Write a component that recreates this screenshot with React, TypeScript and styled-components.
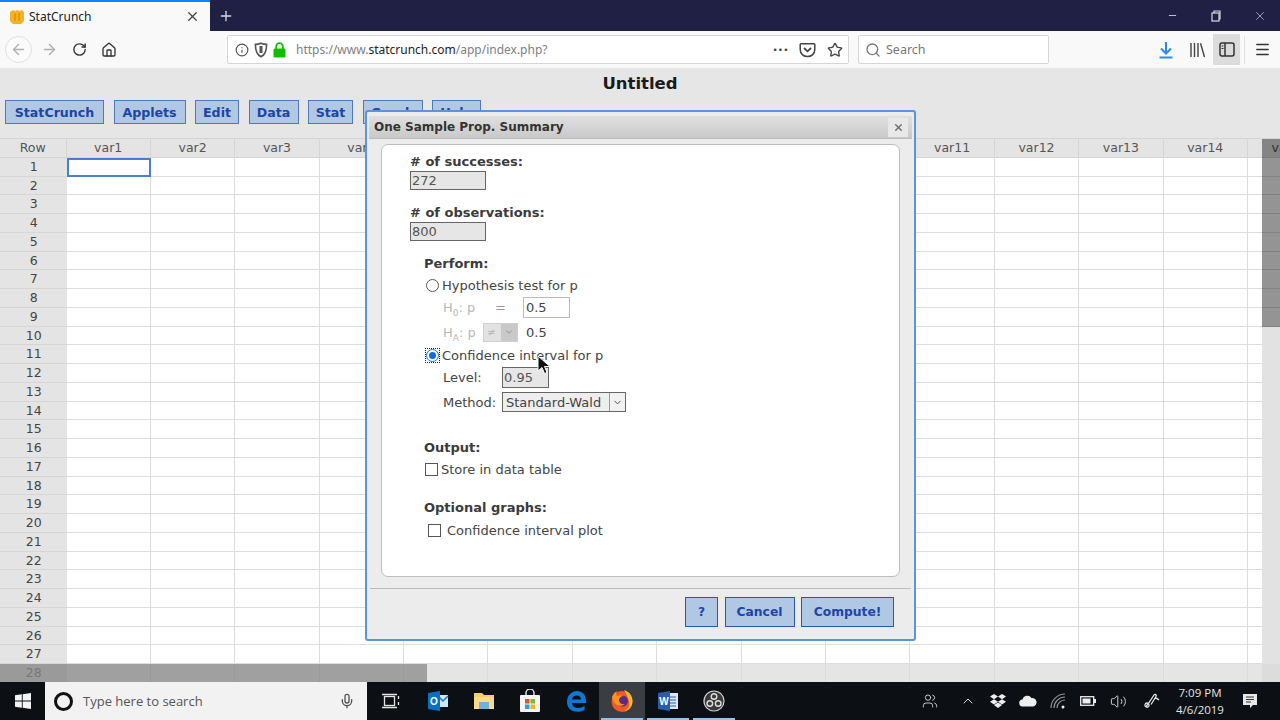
import React from "react";
import styled, { createGlobalStyle } from "styled-components";
import { ArrowLeft, ArrowRight, RotateCw, Home, Info, Star, Search, Menu, X, Plus, Minus, Mic, ChevronDown, ChevronUp, Users, Volume2 } from "lucide-react";

const Global = createGlobalStyle`
  html, body { margin: 0; padding: 0; width: 1280px; height: 720px; overflow: hidden; background: #e6e6e6; }
  * { box-sizing: border-box; }
  #root { width: 1280px; height: 720px; font-family: "DejaVu Sans", Verdana, sans-serif; }
`;
const Screen = styled.div`display: flex; flex-direction: column; width: 1280px; height: 720px; overflow: hidden;`;

/* Browser tab strip */
const TabStrip = styled.div`display: flex; align-items: stretch; height: 31px; background: #1f2044; flex: none;`;
const Tab = styled.div`
  width: 210px; background: #f9f9fa; border-top: 2px solid #0a84ff; display: flex; align-items: center;
  padding: 0 10px 0 9px; gap: 4px; font: 12px "Noto Sans", sans-serif; color: #222;
`;
const TabTitle = styled.span`flex: 1;`;
const NewTab = styled.div`width: 32px; display: flex; align-items: center; justify-content: center; color: #d8d8e2;`;
const WindowControls = styled.div`margin-left: auto; margin-right: -2px; display: flex; align-items: center; color: #cfd0dc;`;
const WinBtn = styled.div`width: 44px; display: flex; align-items: center; justify-content: center;`;

/* Browser navigation toolbar */
const NavBar = styled.div`display: flex; align-items: center; height: 37px; background: #f9f9fa; padding-left: 5px; flex: none;`;
const BackCircle = styled.div`
  width: 27px; height: 27px; border-radius: 50%; border: 1px solid #e0e0e0; background: #fbfbfb; color: #b0b0b0;
  display: flex; align-items: center; justify-content: center; margin-right: 2px;
`;
const NavIcon = styled.div<{ $w?: number; $c?: string; $bg?: string }>`
  width: ${p => p.$w ?? 30}px; height: 31px; display: flex; align-items: center; justify-content: center;
  color: ${p => p.$c ?? "#333"}; background: ${p => p.$bg ?? "transparent"}; flex: none;
`;
const UrlBox = styled.div`
  width: 622px; height: 29px; margin-left: 103px; background: #fff; border: 1px solid #d6d6d6; border-radius: 2px;
  display: flex; align-items: center; padding-left: 4px; flex: none;
`;
const UrlIcon = styled.div`width: 19px; display: flex; justify-content: center; color: #555; flex: none;`;
const UrlText = styled.div`font: 12px "Noto Sans", sans-serif; color: #808080; margin-left: 7px; flex: 1; white-space: nowrap;`;
const Domain = styled.span`color: #222;`;
const UrlAction = styled.div`width: 27px; display: flex; justify-content: center; color: #444; flex: none; font-size: 9px;`;
const SearchBox = styled.div`
  width: 191px; height: 29px; margin-left: 9px; background: #fff; border: 1px solid #d6d6d6; border-radius: 2px;
  display: flex; align-items: center; gap: 5px; padding-left: 6px; color: #777; font: 12.5px "Noto Sans", sans-serif; flex: none;
`;
const NavRight = styled.div`margin-left: 102px; display: flex; align-items: center;`;
const NavDivider = styled.div`width: 1px; height: 28px; background: #e2e2e2; margin: 0 5px 0 4px;`;

/* StatCrunch page */
const Page = styled.div`position: relative; flex: 1; background: #e6e6e6; overflow: hidden;`;
const PageTitle = styled.h1`margin: 0; height: 32px; padding-top: 6px; text-align: center; font-size: 16.5px; line-height: 20px; color: #1a1a1a; font-weight: bold;`;
const MenuBar = styled.div`display: flex; gap: 9.5px; padding-left: 5px; height: 38px;`;
const MenuBtn = styled.div<{ $w: number }>`
  width: ${p => p.$w}px; height: 24px; background: #b0c8e4; border: 1px solid #4f78bd; color: #1c45a8;
  font-size: 12.6px; font-weight: bold; line-height: 23px; white-space: nowrap; text-align: center;
`;

const Sheet = styled.div`position: relative; height: 544px; overflow: hidden; border-top: 1px solid #d4d4d4;`;
const SheetGrid = styled.div`display: grid; grid-template-columns: 66.5px repeat(15, 84.4px); grid-auto-rows: 18.75px; width: 1340px;`;
const HeadCell = styled.div`
  background: #e4e4e4; border-right: 1px solid #d6d6d6; border-bottom: 1px solid #d6d6d6;
  text-align: center; font-size: 12.5px; line-height: 18px; color: #555; white-space: nowrap; overflow: hidden;
`;
const RowCell = styled(HeadCell)`border-right: none; padding-left: 1px; color: #444;`;
const Cell = styled.div<{ $active?: boolean }>`
  background: #fff; border-right: 1px solid #ddd; border-bottom: 1px solid #ddd;
  ${p => p.$active ? "outline: 2px solid #4a7fd0; outline-offset: -2px;" : ""}
`;
const VThumb = styled.div`position: absolute; right: 0; top: 0; width: 18px; height: 188px; background: rgba(0,0,0,.42);`;
const VTrack = styled.div`position: absolute; right: 0; top: 188px; bottom: 0; width: 18px; background: #e2e2e2;`;
const HTrack = styled.div`position: absolute; left: 0; right: 0; bottom: 0; height: 18px; background: rgba(218,218,218,.7);`;
const HThumb = styled.div`position: absolute; left: 0; bottom: 0; width: 427px; height: 18px; background: rgba(0,0,0,.3);`;

/* Dialog */
const Dialog = styled.div`
  position: absolute; left: 365px; top: 42px; width: 551px; height: 531px; background: #ececec;
  border: 2px solid #5b93e0; border-radius: 3px; padding: 4px 2px 0; display: flex; flex-direction: column;
`;
const DialogTitle = styled.div`
  height: 23px; background: linear-gradient(#e0e0e0, #c9c9c9); border-bottom: 1px solid #bbb; flex: none;
  display: flex; align-items: center; justify-content: space-between; padding: 0 4px 0 5px;
  font-size: 12px; font-weight: bold; color: #333;
`;
const CloseBox = styled.div`width: 20px; height: 19px; background: #e8e8e8; display: flex; align-items: center; justify-content: center; color: #777;`;
const Panel = styled.div`
  margin: 5px 12px 0; height: 433px; flex: none; background: #fff; border: 1px solid #bdbdbd; border-radius: 7px;
  padding: 7px 0 0 28px; color: #444; font-size: 13px;
`;
const Label = styled.div<{ $top?: number; $indent?: number }>`
  font-weight: bold; height: 18px; padding-top: 1px; line-height: 18px; font-size: 13px; color: #3b3b3b;
  margin-top: ${p => p.$top ?? 0}px; margin-left: ${p => p.$indent ?? 0}px;
`;
const ValueInput = styled.div`
  margin-top: 1px; width: 76px; height: 19px; background: #e6e6e6; border: 1px solid #666; padding-left: 1px;
  font-size: 13px; line-height: 18px; color: #555;
`;
const Row = styled.div<{ $top?: number; $h?: number; $left: number; $muted?: boolean }>`
  display: flex; align-items: center; height: ${p => p.$h ?? 20}px; margin-top: ${p => p.$top ?? 0}px;
  margin-left: ${p => p.$left}px; color: ${p => p.$muted ? "#b8b8b8" : "#444"}; white-space: nowrap;
`;
const Radio = styled.span<{ $on?: boolean }>`
  width: 13px; height: 13px; border-radius: 50%; border: 1px solid #555; background: #fff; margin-right: 3px; position: relative; flex: none;
  ${p => p.$on ? `border-color: #1f73d8;
    &::before { content: ""; position: absolute; inset: -2px; border: 1px dotted #223; }
    &::after { content: ""; position: absolute; inset: 2px; border-radius: 50%; background: #0a6ee0; }` : ""}
`;
const Check = styled.span<{ $gap: number }>`width: 13px; height: 13px; border: 1px solid #555; background: #fff; margin-right: ${p => p.$gap}px; flex: none;`;
const HypName = styled.span<{ $w: number }>`width: ${p => p.$w}px; flex: none;`;
const Sub = styled.sub`font-size: 9px; line-height: 0;`;
const Small = styled.span`color: #444;`;
const Equals = styled.span`color: #999;`;
const PlainInput = styled.div`
  width: 47px; height: 21px; margin-left: 17px; border: 1px solid #bbb; padding-left: 2px; line-height: 19px; color: #444; background: #fff;
`;
const DisabledSelect = styled.div`
  width: 35px; height: 19px; margin: 0 8px 0 3px; display: flex; background: #e2e2e2; border: 1px solid #cfcfcf;
  font-size: 10px; color: #b5b5b5; align-items: center;
`;
const DisabledArrow = styled.div`margin-left: auto; width: 16px; height: 100%; background: #c9c9c9; color: #888; display: flex; align-items: center; justify-content: center;`;
const FieldName = styled.span`width: 59px; flex: none;`;
const LevelBox = styled.div`width: 47px; height: 21px; background: #e6e6e6; border: 1px solid #666; padding-left: 1px; line-height: 19px; color: #555;`;
const SelectBox = styled.div`
  width: 124px; height: 20px; background: #eee; border: 1px solid #666; display: flex; align-items: center; padding-left: 3px; color: #444;
`;
const SelectArrow = styled.div`margin-left: auto; width: 16px; height: 100%; border-left: 1px solid #999; background: #f2f2f2; display: flex; align-items: center; justify-content: center;`;
const Separator = styled.div`height: 1px; background: #bdbdbd; margin: 11px 1px 0; flex: none;`;
const Footer = styled.div`display: flex; justify-content: flex-end; gap: 6.5px; margin-top: 8px; padding-right: 18px;`;
const FootBtn = styled.div<{ $w: number }>`
  width: ${p => p.$w}px; height: 30px; background: #b0c8e4; border: 1px solid #2a55a8; color: #1c45a8; font-size: 12.3px; font-weight: bold;
  text-align: center; line-height: 29px;
`;
const Cursor = styled.svg`position: absolute; left: 537px; top: 287px;`;

/* Taskbar */
const Taskbar = styled.div`height: 38px; flex: none; background: #0c1015; display: flex; align-items: stretch; color: #e8e8e8;`;
const StartBtn = styled.div`width: 45px; display: flex; align-items: center; justify-content: center;`;
const SearchBar = styled.div`
  width: 322px; background: #f2f2f2; display: flex; align-items: center; padding: 0 12px 0 9px; gap: 10px; color: #555;
  font: 13px "Open Sans", "Noto Sans", sans-serif;
`;
const Cortana = styled.span`width: 19px; height: 19px; border-radius: 50%; border: 3px solid #111; flex: none;`;
const SearchText = styled.span`flex: 1;`;
const AppSlot = styled.div<{ $active?: boolean; $open?: boolean; $w?: number }>`
  position: relative; width: ${p => p.$w ?? 46}px; display: flex; align-items: center; justify-content: center;
  background: ${p => p.$active ? "#3a3d42" : "transparent"};
  ${p => p.$open ? `&::after { content: ""; position: absolute; left: 2px; right: 2px; bottom: 0; height: 2px; background: #8fc4ea; }` : ""}
`;
const Tray = styled.div`margin-left: auto; display: flex; align-items: center; padding-right: 5px;`;
const TraySlot = styled.div<{ $w?: number; $mr?: number }>`
  width: ${p => p.$w ?? 30}px; margin-right: ${p => p.$mr ?? 0}px; display: flex; align-items: center; justify-content: center; color: #ddd;
`;
const Clock = styled.div`width: 50px; text-align: center; white-space: nowrap; font: 11.5px/17px "Open Sans", "Noto Sans", sans-serif; color: #e4e4e4;`;

const Favicon = () => (
  <svg width="16" height="16" viewBox="0 0 16 16"><path d="M1 3l3-2 2 1 2-1 2 1 3-1 2 2v9l-3 3H4l-3-3z" fill="#f4b320" /><path d="M5 4h2v8H5zM9 4h2v8H9z" fill="#e39a12" /></svg>
);
const ShieldIcon = () => (
  <svg width="14" height="16" viewBox="0 0 14 16" fill="none" stroke="#555" strokeWidth="1.6"><path d="M7 1.2c2 1 3.8 1.2 5.6 1.2 0 6-1 10-5.6 12.4C2.4 12.4 1.4 8.4 1.4 2.4 3.2 2.4 5 2.2 7 1.2z" /><path d="M7 4v7" strokeWidth="3" /></svg>
);
const GreenLock = () => (
  <svg width="13" height="16" viewBox="0 0 13 16"><path d="M3.200 7V4.500a3.300 3.300 0 016.600 0V7" fill="none" stroke="#12bc00" strokeWidth="1.800" /><rect x=".5" y="6.500" width="12" height="9" rx="1.200" fill="#12bc00" /></svg>
);
const Pocket = () => (
  <svg width="17" height="16" viewBox="0 0 17 16" fill="none" stroke="#444" strokeWidth="1.5"><path d="M2 1.8h13c.5 0 .8.3.8.8v5c0 4-3.2 7-7.3 7S1.200 11.600 1.200 7.600v-5c0-.5.3-.8.8-.8z" /><path d="M5 6l3.500 3.300L12 6" strokeWidth="1.800" /></svg>
);
const DownloadIcon = () => (
  <svg width="16" height="18" viewBox="0 0 16 18" fill="none" stroke="#2a8ae6" strokeWidth="2"><path d="M8 1v11M3 7.500L8 12.500 13 7.500" /><path d="M1.500 16.500h13" /></svg>
);
const Library = () => (
  <svg width="17" height="16" viewBox="0 0 17 16" fill="none" stroke="#444" strokeWidth="1.400"><path d="M2 1v14M5.500 1v14M9 1v14M11.500 1.200l4 13.800" /></svg>
);
const SidebarIcon = () => (
  <svg width="16" height="15" viewBox="0 0 16 15" fill="none" stroke="#333" strokeWidth="1.500"><rect x="1" y="1" width="14" height="13" rx="2" /><path d="M6 1v13" /><path d="M2.500 4h2M2.500 6.500h2" strokeWidth="1" /></svg>
);
const Restore = () => (
  <svg width="10" height="12" viewBox="0 0 10 12" fill="none" stroke="#dcdce6" strokeWidth="1.200"><rect x="1" y="3" width="7" height="8" /><path d="M3 3V1h6v8H8" /></svg>
);
const Windows = () => (
  <svg width="16" height="16" viewBox="0 0 16 16" fill="#f4f4f4"><path d="M0 2.300l6.800-1v6.300H0zM7.700 1.200L16 0v7.600H7.700zM0 8.400h6.800v6.300L0 13.700zM7.700 8.400H16V16l-8.300-1.200z" /></svg>
);
const TaskView = () => (
  <svg width="18" height="16" viewBox="0 0 18 16" fill="none" stroke="#e4e4e4" strokeWidth="1.300"><rect x="2.500" y="3.500" width="10" height="9" /><path d="M0 1.500h15M0 14.500h15M16.500 3v3M16.500 9v3" /></svg>
);
const Outlook = () => (
  <svg width="22" height="22" viewBox="0 0 22 22"><rect x="11" y="5" width="10" height="12" fill="#cfe6f8" /><path d="M11 6l5 5 5-5" fill="none" stroke="#1a78c8" strokeWidth="1.500" /><path d="M1 3l12-2v20L1 19z" fill="#0a70c4" /><text x="7" y="15" textAnchor="middle" fontSize="10" fontWeight="bold" fill="#fff" fontFamily="Liberation Sans">O</text></svg>
);
const Folder = () => (
  <svg width="22" height="20" viewBox="0 0 22 20"><path d="M1 2h8l2 2h10v14H1z" fill="#f2cf6e" /><path d="M1 6h20v12H1z" fill="#f8dc8c" /><rect x="6" y="11" width="10" height="7" fill="#6db4d8" /></svg>
);
const Store = () => (
  <svg width="22" height="24" viewBox="0 0 22 24"><path d="M7 7V4a4 4 0 018 0v3" fill="none" stroke="#ddd" strokeWidth="1.500" /><rect x="1" y="6" width="20" height="17" rx="1" fill="#f5f5f5" /><rect x="6" y="10" width="4.500" height="4.500" fill="#e2502e" /><rect x="11.500" y="10" width="4.500" height="4.500" fill="#7db92b" /><rect x="6" y="15.500" width="4.500" height="4.500" fill="#2b9fe0" /><rect x="11.500" y="15.500" width="4.500" height="4.500" fill="#f0b51e" /></svg>
);
const Edge = () => (
  <svg width="22" height="22" viewBox="0 0 22 22" fill="none"><path d="M2 12C2 5 7 1 12 1c5 0 9 3.500 9 10v2H7c.3 3.500 3 5 6 5 2.500 0 4.600-.7 6.500-2v4c-2 1.200-4.500 1.800-7 1.800C6.500 21.800 2 18 2 12zm5-2.500h9c0-2.500-1.800-4-4.300-4-2.500 0-4.200 1.500-4.700 4z" fill="#0f78d4" fillRule="evenodd" /></svg>
);
const Firefox = () => (
  <svg width="24" height="24" viewBox="0 0 24 24"><circle cx="12" cy="12.500" r="10.500" fill="#f0572a" /><circle cx="12.500" cy="12" r="5.500" fill="#5b2c86" /><path d="M14 1c5 1.500 9 6 8.500 12-.5 5-4 9-9 9.500 5-2 6.500-6 5.500-10C18 8 16 4 14 1z" fill="#fbb92e" /><path d="M2 8c1-3 3-5 5-6-1 2-1 4 0 5 2-1 5-1 7 0-3 0-5 2-5 4 0 3 3 5 6 4-3 3-9 2-11-2-1-2-2-3-2-5z" fill="#f89322" /></svg>
);
const Word = () => (
  <svg width="22" height="22" viewBox="0 0 22 22"><rect x="10" y="3" width="11" height="16" fill="#dbe7f5" /><path d="M12 7h7M12 10h7M12 13h7M12 16h7" stroke="#2b5fa8" strokeWidth="1" /><path d="M1 3l12-2v20L1 19z" fill="#2a5cab" /><text x="7" y="15" textAnchor="middle" fontSize="10" fontWeight="bold" fill="#fff" fontFamily="Liberation Sans">W</text></svg>
);
const Obs = () => (
  <svg width="22" height="22" viewBox="0 0 22 22"><circle cx="11" cy="11" r="10" fill="#3a3a3a" stroke="#cfcfcf" strokeWidth="1.200" /><circle cx="11" cy="6.500" r="2.800" fill="none" stroke="#ddd" strokeWidth="1.400" /><circle cx="6.800" cy="13.500" r="2.800" fill="none" stroke="#ddd" strokeWidth="1.400" /><circle cx="15.200" cy="13.500" r="2.800" fill="none" stroke="#ddd" strokeWidth="1.400" /></svg>
);
const Dropbox = () => (
  <svg width="16" height="14" viewBox="0 0 16 14" fill="#eee"><path d="M4 0l4 2.600L4 5.200 0 2.600zM12 0l4 2.600-4 2.600-4-2.600zM0 7.800l4-2.600 4 2.600-4 2.600zM12 5.200l4 2.600-4 2.600-4-2.600zM4 11l4-2.500 4 2.500-4 3z" /></svg>
);
const Cloud = () => (
  <svg width="18" height="12" viewBox="0 0 18 12" fill="#eee"><path d="M4 11.500a3.500 3.500 0 01-.5-7A5 5 0 0112.500 3 4 4 0 0114 11.500z" /></svg>
);
const Wifi = () => (
  <svg width="16" height="16" viewBox="0 0 16 16" fill="none" stroke="#bbb" strokeWidth="1.200"><path d="M1 15A14 14 0 0115 1M4 15A11 11 0 0115 4M7 15a8 8 0 018-8" opacity=".75" /><circle cx="13" cy="14" r="1.500" fill="#eee" stroke="none" /></svg>
);
const Battery = () => (
  <svg width="16" height="10" viewBox="0 0 16 10"><rect x=".7" y=".7" width="13" height="8.600" fill="none" stroke="#eee" strokeWidth="1.300" /><rect x="2.500" y="2.500" width="8" height="5" fill="#eee" /><rect x="14" y="3" width="2" height="4" fill="#eee" /></svg>
);
const Pen = () => (
  <svg width="18" height="18" viewBox="0 0 18 18" fill="none" stroke="#e4e4e4" strokeWidth="1.300"><path d="M3 15c-2-1-1-4 1-4s3 3 1 4-2-1 0-3l6-9c1-1.500 3 0 2 1.500l-5 8M12 6c2 0 3 1 4 2" /></svg>
);
const Notify = () => (
  <svg width="16" height="16" viewBox="0 0 16 16"><path d="M1 1h14v11h-4l-3 3v-3H1z" fill="#e8e8e8" /><path d="M4 4h8M4 6.500h8M4 9h5" stroke="#333" strokeWidth="1" /></svg>
);

const menus: [string, number][] = [["StatCrunch", 99], ["Applets", 72], ["Edit", 44], ["Data", 50], ["Stat", 45], ["Graph", 60], ["Help", 49]];
const columns = Array.from({ length: 15 }, (_, i) => `var${i + 1}`);
const rows = Array.from({ length: 28 }, (_, i) => i + 1);

export default function App() {
  return (
    <Screen>
      <Global />
      <TabStrip>
        <Tab><Favicon /><TabTitle>StatCrunch</TabTitle><X size={15} color="#444" /></Tab>
        <NewTab><Plus size={16} /></NewTab>
        <WindowControls>
          <WinBtn><Minus size={11} /></WinBtn>
          <WinBtn><Restore /></WinBtn>
          <WinBtn><X size={14} strokeWidth={1.2} /></WinBtn>
        </WindowControls>
      </TabStrip>
      <NavBar>
        <BackCircle><ArrowLeft size={17} /></BackCircle>
        <NavIcon $c="#b0b0b0"><ArrowRight size={17} /></NavIcon>
        <NavIcon><RotateCw size={15} strokeWidth={2.2} /></NavIcon>
        <NavIcon><Home size={16} strokeWidth={2} /></NavIcon>
        <UrlBox>
          <UrlIcon><Info size={14} /></UrlIcon>
          <UrlIcon><ShieldIcon /></UrlIcon>
          <UrlIcon><GreenLock /></UrlIcon>
          <UrlText>https://www.<Domain>statcrunch.com</Domain>/app/index.php?</UrlText>
          <UrlAction>•••</UrlAction>
          <UrlAction><Pocket /></UrlAction>
          <UrlAction><Star size={16} /></UrlAction>
        </UrlBox>
        <SearchBox><Search size={16} />Search</SearchBox>
        <NavRight>
          <NavIcon $w={30}><DownloadIcon /></NavIcon>
          <NavIcon $w={32}><Library /></NavIcon>
          <NavIcon $w={27} $bg="#dcdcdc"><SidebarIcon /></NavIcon>
          <NavDivider />
          <NavIcon $w={24}><Menu size={17} /></NavIcon>
        </NavRight>
      </NavBar>
      <Page>
        <PageTitle>Untitled</PageTitle>
        <MenuBar>
          {menus.map(([m, w]) => <MenuBtn key={m} $w={w}>{m}</MenuBtn>)}
        </MenuBar>
        <Sheet>
          <SheetGrid>
            <HeadCell>Row</HeadCell>
            {columns.map(c => <HeadCell key={c}>{c}</HeadCell>)}
            {rows.map(r => (
              <React.Fragment key={r}>
                <RowCell>{r}</RowCell>
                {columns.map((c, i) => <Cell key={c} $active={r === 1 && i === 0} />)}
              </React.Fragment>
            ))}
          </SheetGrid>
          <VThumb />
          <VTrack />
          <HTrack />
          <HThumb />
        </Sheet>
        <Dialog>
          <DialogTitle>
            One Sample Prop. Summary
            <CloseBox><X size={11} strokeWidth={3.5} /></CloseBox>
          </DialogTitle>
          <Panel>
            <Label># of successes:</Label>
            <ValueInput>272</ValueInput>
            <Label $top={13}># of observations:</Label>
            <ValueInput>800</ValueInput>
            <Label $top={13} $indent={14}>Perform:</Label>
            <Row $top={3} $left={16}><Radio />Hypothesis test for p</Row>
            <Row $top={2} $h={21} $left={33} $muted>
              <HypName $w={52}>H<Sub>0</Sub>: p</HypName><Equals>=</Equals>
              <PlainInput>0.5</PlainInput>
            </Row>
            <Row $top={4} $left={33} $muted>
              <HypName $w={37}>H<Sub>A</Sub>: p</HypName>
              <DisabledSelect>&nbsp;≠<DisabledArrow><ChevronDown size={10} /></DisabledArrow></DisabledSelect>
              <Small>0.5</Small>
            </Row>
            <Row $top={3} $left={16}><Radio $on />Confidence interval for p</Row>
            <Row $top={2} $h={21} $left={33}><FieldName>Level:</FieldName><LevelBox>0.95</LevelBox></Row>
            <Row $top={4} $left={33}>
              <FieldName>Method:</FieldName>
              <SelectBox>Standard-Wald<SelectArrow><ChevronDown size={11} /></SelectArrow></SelectBox>
            </Row>
            <Label $top={26} $indent={14}>Output:</Label>
            <Row $top={3} $left={15}><Check $gap={3} />Store in data table</Row>
            <Label $top={19} $indent={14}>Optional graphs:</Label>
            <Row $top={4} $left={18}><Check $gap={6} />Confidence interval plot</Row>
          </Panel>
          <Separator />
          <Footer>
            <FootBtn $w={33}>?</FootBtn>
            <FootBtn $w={70}>Cancel</FootBtn>
            <FootBtn $w={93}>Compute!</FootBtn>
          </Footer>
        </Dialog>
        <Cursor width="14" height="20" viewBox="0 0 14 20"><path d="M1 1v15l4-3.500 2.500 6 2.500-1-2.500-6H13z" fill="#111" stroke="#fff" strokeWidth="1" /></Cursor>
      </Page>
      <Taskbar>
        <StartBtn><Windows /></StartBtn>
        <SearchBar><Cortana /><SearchText>Type here to search</SearchText><Mic size={16} color="#555" /></SearchBar>
        <AppSlot $w={48}><TaskView /></AppSlot>
        <AppSlot><Outlook /></AppSlot>
        <AppSlot><Folder /></AppSlot>
        <AppSlot><Store /></AppSlot>
        <AppSlot><Edge /></AppSlot>
        <AppSlot $active $open><Firefox /></AppSlot>
        <AppSlot $open><Word /></AppSlot>
        <AppSlot $open><Obs /></AppSlot>
        <Tray>
          <TraySlot $mr={8}><Users size={16} strokeWidth={1.3} /></TraySlot>
          <TraySlot><ChevronUp size={16} strokeWidth={1.5} /></TraySlot>
          <TraySlot><Dropbox /></TraySlot>
          <TraySlot><Cloud /></TraySlot>
          <TraySlot><Wifi /></TraySlot>
          <TraySlot><Battery /></TraySlot>
          <TraySlot $mr={2}><Volume2 size={17} strokeWidth={1.3} /></TraySlot>
          <TraySlot $w={34} $mr={6}><Pen /></TraySlot>
          <Clock>7:09 PM<br />4/6/2019</Clock>
          <TraySlot $w={50}><Notify /></TraySlot>
        </Tray>
      </Taskbar>
    </Screen>
  );
}
